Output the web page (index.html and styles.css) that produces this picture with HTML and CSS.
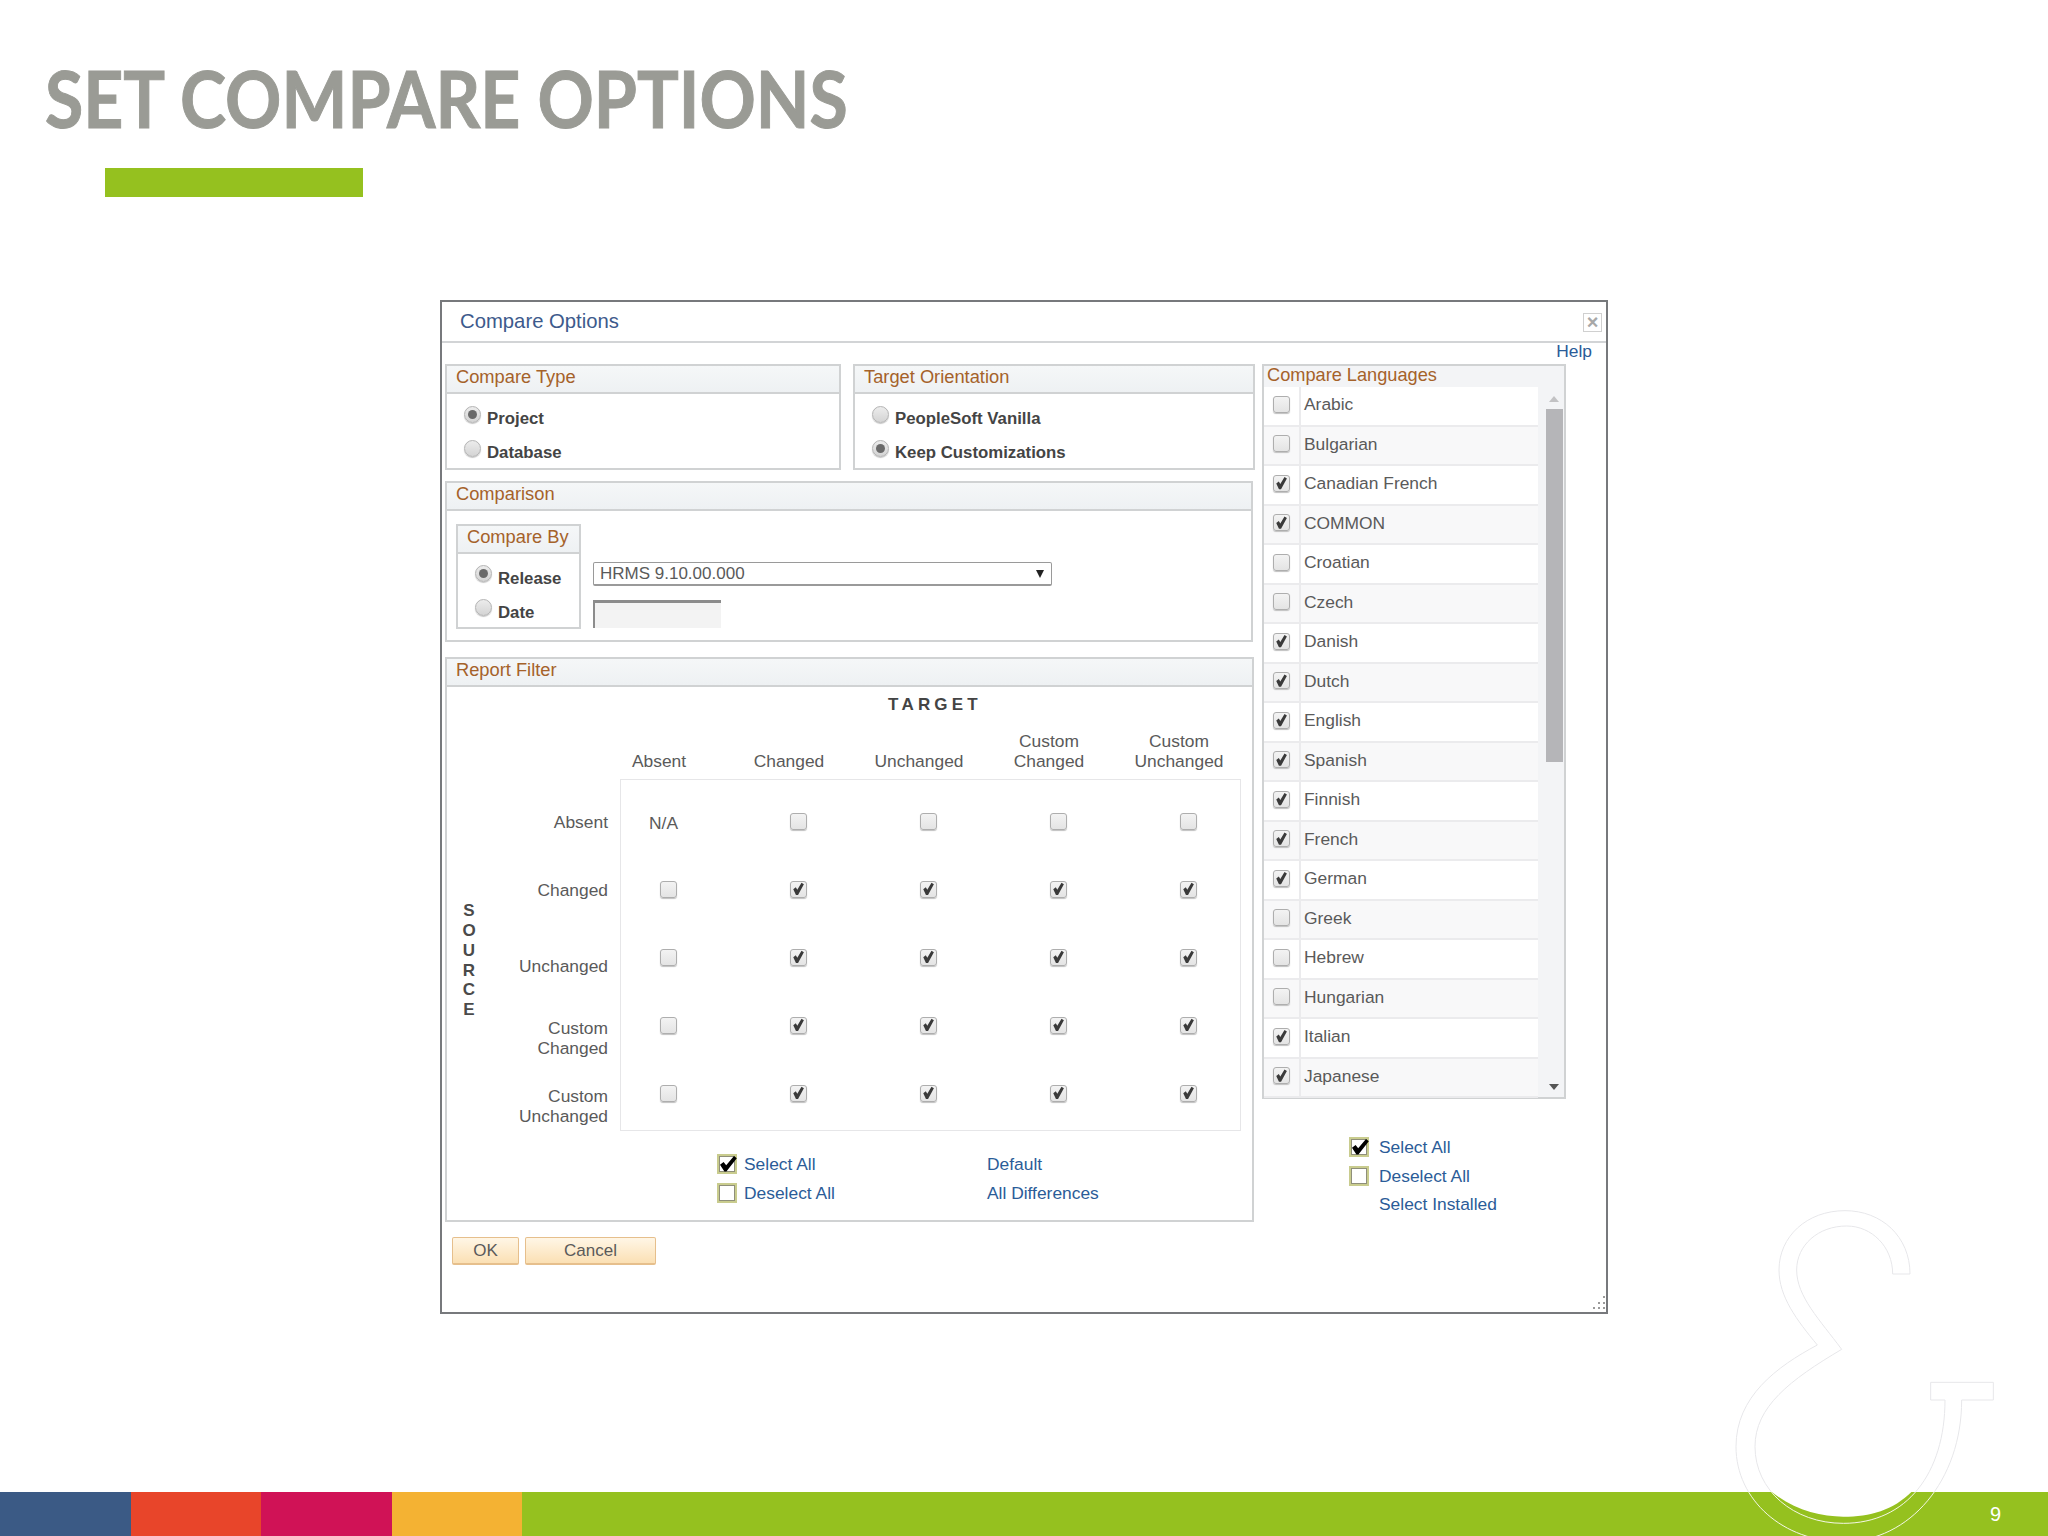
FILE: index.html
```html
<!DOCTYPE html>
<html lang="en">
<head>
<meta charset="utf-8">
<title>Set Compare Options</title>
<link rel="stylesheet" href="styles.css">
</head>
<body>
<div class="slide">
  <h1 class="slide-title">SET COMPARE OPTIONS</h1>
  <div class="accent"></div>

  <section class="dialog">
    <header class="titlebar">
      <span class="dialog-title">Compare Options</span>
      <span class="close">×</span>
    </header>
    <div class="help-row"><a class="link">Help</a></div>
    <div class="columns">
      <div class="col-left">
        <div class="row-top">
          <div class="panel panel-type">
            <div class="panel-head">Compare Type</div>
            <div class="radios">
              <label class="radio-row"><input type="radio" name="t" checked><span>Project</span></label>
              <label class="radio-row"><input type="radio" name="t"><span>Database</span></label>
            </div>
          </div>
          <div class="panel panel-target">
            <div class="panel-head">Target Orientation</div>
            <div class="radios">
              <label class="radio-row"><input type="radio" name="o"><span>PeopleSoft Vanilla</span></label>
              <label class="radio-row"><input type="radio" name="o" checked><span>Keep Customizations</span></label>
            </div>
          </div>
        </div>

        <div class="panel panel-comparison">
          <div class="panel-head">Comparison</div>
          <div class="comparison-body">
            <div class="panel panel-by">
              <div class="panel-head head-by">Compare By</div>
              <div class="radios radios-by">
                <label class="radio-row"><input type="radio" name="b" checked><span>Release</span></label>
                <label class="radio-row"><input type="radio" name="b"><span>Date</span></label>
              </div>
            </div>
            <div class="by-fields">
              <div class="select"><span>HRMS 9.10.00.000</span><span class="select-arrow"></span></div>
              <input class="date" type="text" disabled>
            </div>
          </div>
        </div>

        <div class="panel panel-filter">
          <div class="panel-head">Report Filter</div>
          <div class="target-label">TARGET</div>
          <div class="heads">
            <div>Absent</div>
            <div>Changed</div>
            <div>Unchanged</div>
            <div>Custom<br>Changed</div>
            <div>Custom<br>Unchanged</div>
          </div>
          <div class="filter-main">
            <div class="source"><span>S</span><span>O</span><span>U</span><span>R</span><span>C</span><span>E</span></div>
            <div class="row-labels">
              <div>Absent</div>
              <div>Changed</div>
              <div class="low-1">Unchanged</div>
              <div class="low-2">Custom<br>Changed</div>
              <div class="low-2">Custom<br>Unchanged</div>
            </div>
            <div class="matrix">
              <div class="cell na">N/A</div>
              <div class="cell"><input type="checkbox"></div>
              <div class="cell"><input type="checkbox"></div>
              <div class="cell"><input type="checkbox"></div>
              <div class="cell"><input type="checkbox"></div>

              <div class="cell"><input type="checkbox"></div>
              <div class="cell"><input type="checkbox" checked></div>
              <div class="cell"><input type="checkbox" checked></div>
              <div class="cell"><input type="checkbox" checked></div>
              <div class="cell"><input type="checkbox" checked></div>

              <div class="cell"><input type="checkbox"></div>
              <div class="cell"><input type="checkbox" checked></div>
              <div class="cell"><input type="checkbox" checked></div>
              <div class="cell"><input type="checkbox" checked></div>
              <div class="cell"><input type="checkbox" checked></div>

              <div class="cell"><input type="checkbox"></div>
              <div class="cell"><input type="checkbox" checked></div>
              <div class="cell"><input type="checkbox" checked></div>
              <div class="cell"><input type="checkbox" checked></div>
              <div class="cell"><input type="checkbox" checked></div>

              <div class="cell"><input type="checkbox"></div>
              <div class="cell"><input type="checkbox" checked></div>
              <div class="cell"><input type="checkbox" checked></div>
              <div class="cell"><input type="checkbox" checked></div>
              <div class="cell"><input type="checkbox" checked></div>
            </div>
          </div>
          <div class="filter-links">
            <div class="link-stack stack-a">
              <div class="link-row"><span class="icon-box on"></span><a class="link">Select All</a></div>
              <div class="link-row"><span class="icon-box"></span><a class="link">Deselect All</a></div>
            </div>
            <div class="link-stack">
              <div class="link-row"><a class="link">Default</a></div>
              <div class="link-row"><a class="link">All Differences</a></div>
            </div>
          </div>
        </div>

        <div class="buttons">
          <button class="btn btn-ok">OK</button>
          <button class="btn btn-cancel">Cancel</button>
        </div>
      </div>

      <div class="col-right">
        <div class="panel panel-lang">
          <div class="lang-head">Compare Languages</div>
          <div class="lang-body">
            <div class="lang-list">
              <div class="lang-row"><div class="lang-check"><input type="checkbox"></div><div class="lang-name">Arabic</div></div>
              <div class="lang-row"><div class="lang-check"><input type="checkbox"></div><div class="lang-name">Bulgarian</div></div>
              <div class="lang-row"><div class="lang-check"><input type="checkbox" checked></div><div class="lang-name">Canadian French</div></div>
              <div class="lang-row"><div class="lang-check"><input type="checkbox" checked></div><div class="lang-name">COMMON</div></div>
              <div class="lang-row"><div class="lang-check"><input type="checkbox"></div><div class="lang-name">Croatian</div></div>
              <div class="lang-row"><div class="lang-check"><input type="checkbox"></div><div class="lang-name">Czech</div></div>
              <div class="lang-row"><div class="lang-check"><input type="checkbox" checked></div><div class="lang-name">Danish</div></div>
              <div class="lang-row"><div class="lang-check"><input type="checkbox" checked></div><div class="lang-name">Dutch</div></div>
              <div class="lang-row"><div class="lang-check"><input type="checkbox" checked></div><div class="lang-name">English</div></div>
              <div class="lang-row"><div class="lang-check"><input type="checkbox" checked></div><div class="lang-name">Spanish</div></div>
              <div class="lang-row"><div class="lang-check"><input type="checkbox" checked></div><div class="lang-name">Finnish</div></div>
              <div class="lang-row"><div class="lang-check"><input type="checkbox" checked></div><div class="lang-name">French</div></div>
              <div class="lang-row"><div class="lang-check"><input type="checkbox" checked></div><div class="lang-name">German</div></div>
              <div class="lang-row"><div class="lang-check"><input type="checkbox"></div><div class="lang-name">Greek</div></div>
              <div class="lang-row"><div class="lang-check"><input type="checkbox"></div><div class="lang-name">Hebrew</div></div>
              <div class="lang-row"><div class="lang-check"><input type="checkbox"></div><div class="lang-name">Hungarian</div></div>
              <div class="lang-row"><div class="lang-check"><input type="checkbox" checked></div><div class="lang-name">Italian</div></div>
              <div class="lang-row"><div class="lang-check"><input type="checkbox" checked></div><div class="lang-name">Japanese</div></div>
            </div>
            <div class="scrollbar">
              <span class="arrow-up"></span>
              <span class="thumb"></span>
              <span class="arrow-down"></span>
            </div>
          </div>
        </div>
        <div class="link-stack lang-links">
          <div class="link-row"><span class="icon-box on"></span><a class="link">Select All</a></div>
          <div class="link-row"><span class="icon-box"></span><a class="link">Deselect All</a></div>
          <div class="link-row"><span class="icon-spacer"></span><a class="link">Select Installed</a></div>
        </div>
      </div>
    </div>
    <svg class="grip" viewBox="0 0 15 15" width="15" height="15" aria-hidden="true">
      <g fill="#9a9a9a">
        <rect x="12" y="1" width="2" height="2"/>
        <rect x="12" y="7" width="2" height="2"/><rect x="7" y="7" width="2" height="2"/>
        <rect x="12" y="12" width="2" height="2"/><rect x="7" y="12" width="2" height="2"/><rect x="2" y="12" width="2" height="2"/>
      </g>
    </svg>
  </section>

  <footer class="footer">
    <span class="seg seg-blue"></span>
    <span class="seg seg-red"></span>
    <span class="seg seg-pink"></span>
    <span class="seg seg-amber"></span>
    <span class="page-num">9</span>
  </footer>

  <svg class="logo" viewBox="0 0 1104 1068" width="368" height="356" aria-hidden="true">
    <defs>
      <path id="amp" d="M690 282 C690 170 605 92 495 92 C380 92 297 170 297 270 C297 350 350 420 412 495 C290 560 168 650 168 800 C168 960 310 1085 490 1085 C690 1085 845 900 845 660 L940 660 L940 607 L752 607 L752 660 L795 660 C795 880 680 1030 490 1030 C340 1030 225 930 225 800 C225 680 330 600 485 508 C420 420 350 350 350 270 C350 195 415 138 500 138 C575 138 638 200 638 282 Z"/>
      <clipPath id="above"><rect x="0" y="0" width="1104" height="935"/></clipPath>
      <clipPath id="below"><rect x="0" y="935" width="1104" height="133"/></clipPath>
    </defs>
    <path class="amp-counter" d="M275 935 C340 990 420 1010 490 1010 C570 1010 640 990 695 935 Z"/>
    <use href="#amp" class="amp-line" clip-path="url(#above)"/>
    <use href="#amp" class="amp-line-light" clip-path="url(#below)"/>
  </svg>
</div>
</body>
</html>
```

FILE: styles.css
```css
* { box-sizing: border-box; }
html, body { margin: 0; padding: 0; background: #fff; }
body { font-family: "Liberation Sans", Arial, sans-serif; font-size: 17.4px; color: #5a5a5a; }

.slide {
  position: relative;
  width: 2048px;
  height: 1536px;
  overflow: hidden;
  display: flex;
  flex-direction: column;
}

.slide-title {
  margin: 58px 0 0 45px;
  font-family: Lato, "Liberation Sans", sans-serif;
  font-weight: 700;
  font-size: 79px;
  line-height: 80px;
  color: #9a9b95;
  -webkit-text-stroke: 1px #9a9b95;
  white-space: nowrap;
  transform: scaleX(0.883);
  transform-origin: left center;
}
.accent {
  width: 258px;
  height: 29px;
  margin: 30px 0 0 105px;
  background: #95c11f;
}

.dialog {
  position: relative;
  width: 1168px;
  height: 1014px;
  margin: 103px 0 0 440px;
  border: 2px solid #77797c;
  background: #fff;
}
.titlebar {
  height: 41px;
  padding: 0 4px 0 18px;
  border-bottom: 2px solid #d2d4d6;
  display: flex;
  align-items: center;
  justify-content: space-between;
}
.dialog-title { font-size: 20.3px; color: #3d5a8c; }
.close {
  width: 19px;
  height: 19px;
  margin-top: 1px;
  border: 1px solid #d0d0d0;
  color: #a8a8a8;
  font-size: 20px;
  font-weight: 700;
  line-height: 16px;
  text-align: center;
}
.help-row {
  height: 21px;
  padding-right: 14px;
  text-align: right;
  line-height: 16px;
}
.link { color: #2b5c98; }

.columns {
  display: flex;
  align-items: flex-start;
  padding-left: 3px;
}
.col-left { width: 810px; display: flex; flex-direction: column; }
.col-right { width: 304px; margin-left: 7px; }

.panel { border: 2px solid #d0d2d3; background: #fff; }
.panel-head {
  height: 28px;
  padding-left: 9px;
  border-bottom: 2px solid #d0d2d3;
  background: linear-gradient(#f5f7f8, #eef1f3);
  color: #a5622a;
  font-size: 18.3px;
  line-height: 22px;
}
.row-top { display: flex; gap: 12px; }
.panel-type { width: 396px; height: 106px; }
.panel-target { width: 402px; height: 106px; }

.radios { padding: 5px 0 0 17px; }
.radio-row {
  height: 34px;
  display: flex;
  align-items: center;
  gap: 6px;
  font-size: 16.8px;
  font-weight: 700;
  color: #444;
}
.radio-row span { margin-top: 6px; }
.radio-row input {
  appearance: none;
  width: 17px;
  height: 17px;
  margin: 0 0 4px;
  border: 1px solid #b4b4b4;
  border-radius: 50%;
  background: linear-gradient(#ececec, #d4d4d4);
  box-shadow: 0 1px 1px #c4c4c4;
  position: relative;
}
.radio-row input:checked::after {
  content: "";
  position: absolute;
  left: 3px;
  top: 3px;
  width: 9px;
  height: 9px;
  border-radius: 50%;
  background: #6a6a6a;
}

.panel-comparison { width: 808px; height: 161px; margin-top: 11px; }
.comparison-body { display: flex; gap: 12px; padding: 13px 0 0 9px; }
.panel-by { width: 125px; height: 105px; }
.radios-by { padding: 6px 0 0 17px; }
.radios-by .radio-row input { margin-bottom: 8px; }
.radios-by .radio-row span { margin-top: 4px; }
.by-fields { display: flex; flex-direction: column; align-items: flex-start; padding-top: 38px; }
.select {
  width: 459px;
  height: 24px;
  padding: 0 6px;
  border: 1px solid #9a9a9a;
  border-bottom-width: 2px;
  border-radius: 2px;
  display: flex;
  align-items: center;
  justify-content: space-between;
  line-height: 20px;
  font-size: 17px;
  color: #5a5a5a;
}
.select-arrow {
  width: 0;
  height: 0;
  margin-right: 1px;
  border-left: 4px solid transparent;
  border-right: 4px solid transparent;
  border-top: 8px solid #222;
}
.date {
  width: 128px;
  height: 28px;
  margin: 14px 0 0;
  padding: 0;
  border: 0;
  border-top: 3px solid #8c8c8c;
  border-left: 2px solid #8c8c8c;
  background: #f3f3f3;
  display: block;
}

.panel-filter { width: 809px; height: 565px; margin-top: 15px; }
.target-label {
  margin-top: 8px;
  padding-left: 171px;
  text-align: center;
  font-weight: 700;
  font-size: 17px;
  letter-spacing: 4.2px;
  line-height: 20px;
  color: #444;
}
.heads {
  display: flex;
  align-items: flex-end;
  margin: 16px 0 8px 147px;
  line-height: 20px;
  text-align: center;
}
.heads > div { width: 130px; }
.filter-main { display: flex; }
.source {
  width: 44px;
  display: flex;
  flex-direction: column;
  align-items: center;
  justify-content: center;
  padding-top: 11px;
  font-weight: 700;
  font-size: 17px;
  line-height: 19.8px;
  color: #4a4a4a;
}
.row-labels {
  width: 117px;
  margin-right: 12px;
  padding-top: 9px;
  text-align: right;
  line-height: 20px;
}
.row-labels > div { height: 68px; padding-top: 24px; }
.row-labels > .low-1 { padding-top: 32px; }
.row-labels > .low-2 { padding-top: 26px; }
.matrix {
  width: 621px;
  height: 352px;
  padding: 7px 0 3px;
  border: 1px solid #e6e6e8;
  display: grid;
  grid-template-columns: repeat(4, 130px) 1fr;
  grid-auto-rows: 68px;
}
.cell { display: flex; align-items: center; padding-left: 39px; }
.na { padding: 4px 0 0 28px; }

input[type="checkbox"] {
  appearance: none;
  position: relative;
  width: 17px;
  height: 17px;
  margin: 0;
  border: 1px solid #aeaeae;
  border-radius: 3px;
  background: linear-gradient(#f3f3f3, #e4e4e4);
  box-shadow: 0 1px 1px #c0c0c0;
}
input[type="checkbox"]:checked::after {
  content: "";
  position: absolute;
  inset: 0;
  background: #3a3a3a;
  clip-path: polygon(15% 52%, 32% 38%, 42% 55%, 70% 8%, 86% 18%, 47% 90%, 33% 90%);
}

.filter-links { display: flex; margin-top: 19px; padding-left: 270px; }
.stack-a { width: 270px; }
.link-row { height: 28.7px; display: flex; align-items: center; gap: 7px; }
.icon-box {
  position: relative;
  width: 20px;
  height: 20px;
  border: 2px solid #c9cc8e;
  box-shadow: inset 0 0 0 1px #8f8f7a;
  background: #fff;
}
.icon-box.on::after {
  content: "";
  position: absolute;
  left: -1px;
  top: -2px;
  width: 20px;
  height: 20px;
  background: #000;
  clip-path: polygon(10% 52%, 28% 38%, 41% 55%, 80% 8%, 94% 20%, 42% 86%, 32% 86%);
}

.buttons { display: flex; gap: 6px; margin: 15px 0 0 7px; }
.btn {
  height: 28px;
  padding: 0;
  border: 1px solid #e6bf8c;
  border-bottom-width: 2px;
  border-radius: 2px;
  background: linear-gradient(#fff6e6, #fbe0b4);
  font-family: "Liberation Sans", Arial, sans-serif;
  font-size: 17px;
  color: #5a5a5a;
}
.btn-ok { width: 67px; }
.btn-cancel { width: 131px; }

.panel-lang { width: 304px; height: 735px; }
.lang-head {
  height: 21px;
  padding-left: 3px;
  background: #f3f4f6;
  color: #a5622a;
  font-size: 18.2px;
  line-height: 18px;
}
.lang-body { display: flex; background: #f3f4f6; height: 710px; }
.lang-list { width: 275px; }
.lang-row {
  height: 39.5px;
  display: flex;
  align-items: stretch;
  border-bottom: 2px solid #ebebed;
  background: #fff;
}
.lang-row:nth-child(even) { background: #f8f8f9; }
.lang-check {
  width: 37px;
  padding: 0 0 3px 9px;
  display: flex;
  align-items: center;
  border-right: 2px solid #ebebed;
}
.lang-name { padding: 0 0 2px 3px; display: flex; align-items: center; }
.scrollbar {
  width: 20px;
  margin-left: 6px;
  display: flex;
  flex-direction: column;
  align-items: center;
}
.arrow-up {
  width: 0;
  height: 0;
  margin-top: 9px;
  border-left: 5px solid transparent;
  border-right: 5px solid transparent;
  border-bottom: 6px solid #c2c2c4;
}
.thumb { width: 17px; height: 353px; margin-top: 7px; background: #b5b5b8; }
.arrow-down {
  width: 0;
  height: 0;
  margin-top: auto;
  margin-bottom: 7px;
  border-left: 5px solid transparent;
  border-right: 5px solid transparent;
  border-top: 6px solid #555;
}
.lang-links { margin-top: 34px; padding-left: 87px; }
.lang-links .link-row { gap: 10px; }
.icon-spacer { width: 20px; }

.grip { position: absolute; right: 0; bottom: 2px; }

.footer {
  margin-top: auto;
  height: 44px;
  display: flex;
  align-items: center;
  background: #95c11f;
  flex: none;
}
.seg { width: 130.5px; height: 100%; }
.seg-blue { background: #3b5a85; }
.seg-red { background: #e8452a; }
.seg-pink { background: #d01256; }
.seg-amber { background: #f4b233; }
.page-num { margin-left: auto; margin-right: 47px; color: #fff; font-size: 20px; }

.logo { position: absolute; left: 1680px; top: 1180px; }
.amp-counter { fill: #fff; }
.amp-line { fill: none; stroke: #e7e7ea; stroke-width: 3; }
.amp-line-light { fill: none; stroke: #f4f7e6; stroke-width: 3; }
```
